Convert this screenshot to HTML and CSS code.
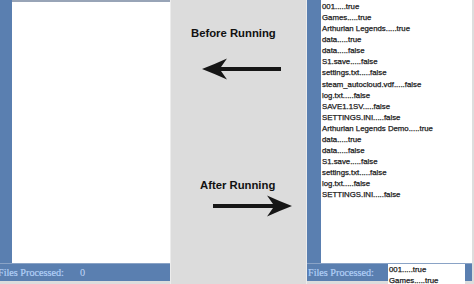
FILE: index.html
```html
<!DOCTYPE html>
<html>
<head>
<meta charset="utf-8">
<link rel="stylesheet" href="styles.css">
</head>
<body>
<div class="app">
  <div class="pane pane-left">
    <div class="pane-main">
      <div class="strip strip-left"></div>
      <div class="sheet sheet-left"></div>
    </div>
    <div class="bar">
      <span class="bar-label bar-label-left">Files Processed:</span>
      <span class="bar-count">0</span>
    </div>
  </div>

  <div class="middle">
    <div class="caption caption-before">Before Running</div>
    <svg class="arrow arrow-left" width="80" height="24" viewBox="0 0 80 24">
      <path d="M0 11 Q13 6 25 0.5 L19 9 L79 9 L79 13 L19 13 L25 21.5 Q13 16 0 11 Z" fill="#161616"/>
    </svg>
    <div class="caption caption-after">After Running</div>
    <svg class="arrow arrow-right" width="80" height="24" viewBox="0 0 80 24">
      <path d="M80 11 Q67 6 55 0.5 L61 9 L1 9 L1 13 L61 13 L55 21.5 Q67 16 80 11 Z" fill="#161616"/>
    </svg>
  </div>

  <div class="pane pane-right">
    <div class="pane-main">
      <div class="strip strip-right"></div>
      <div class="sheet sheet-right">
        <div class="list">
          <div>001.....true</div>
          <div>Games.....true</div>
          <div>Arthurian Legends.....true</div>
          <div>data.....true</div>
          <div>data.....false</div>
          <div>S1.save.....false</div>
          <div>settings.txt.....false</div>
          <div>steam_autocloud.vdf.....false</div>
          <div>log.txt.....false</div>
          <div>SAVE1.1SV.....false</div>
          <div>SETTINGS.INI.....false</div>
          <div>Arthurian Legends Demo.....true</div>
          <div>data.....true</div>
          <div>data.....false</div>
          <div>S1.save.....false</div>
          <div>settings.txt.....false</div>
          <div>log.txt.....false</div>
          <div>SETTINGS.INI.....false</div>
        </div>
      </div>
    </div>
    <div class="bar">
      <span class="bar-label bar-label-right">Files Processed:</span>
      <div class="mini-list">
        <div>001.....true</div>
        <div>Games.....true</div>
      </div>
    </div>
  </div>
</div>
</body>
</html>
```

FILE: styles.css
```css
html, body {
  margin: 0;
  padding: 0;
}

body {
  width: 474px;
  height: 284px;
  overflow: hidden;
  background: #dddddd;
  font-family: "Liberation Sans", Arial, sans-serif;
}

.app {
  display: flex;
  width: 474px;
  height: 284px;
}

.pane {
  display: flex;
  flex-direction: column;
  height: 284px;
  background: #dddddd;
}

.pane-left {
  width: 170px;
}

.pane-right {
  width: 165px;
}

.pane-main {
  display: flex;
  height: 263px;
}

.strip {
  background: #5a7fb0;
}

.strip-left {
  width: 12px;
}

.strip-right {
  width: 14px;
}

.sheet {
  flex: 1;
  background: #ffffff;
  overflow: hidden;
}

.sheet-left {
  border-top: 2px solid #98a4b7;
}

.list {
  padding: 1px 0 0 1px;
  font-size: 7.8px;
  line-height: 11.08px;
  color: #1a1a1a;
  -webkit-text-stroke: 0.25px #1a1a1a;
  white-space: nowrap;
}

.bar {
  display: flex;
  align-items: flex-start;
  height: 17px;
  border-top: 1px solid #8aa3c6;
  background: #5a7fb0;
}

.bar-label {
  flex: none;
  font-family: "Liberation Serif", "Times New Roman", serif;
  font-size: 10.2px;
  line-height: 17px;
  color: #b3d0f7;
  -webkit-text-stroke: 0.2px #b3d0f7;
  white-space: nowrap;
}

.bar-label-left {
  margin-left: -2px;
}

.bar-count {
  margin-left: 16px;
  font-family: "Liberation Serif", "Times New Roman", serif;
  font-size: 10.2px;
  line-height: 17px;
  color: #c3dafa;
}

.bar-label-right {
  width: 80px;
  margin-left: 1px;
}

.mini-list {
  flex: none;
  width: 77px;
  height: 20px;
  padding-left: 1px;
  box-sizing: border-box;
  background: #ffffff;
  overflow: hidden;
  font-size: 7.8px;
  line-height: 11.08px;
  color: #1a1a1a;
  -webkit-text-stroke: 0.25px #1a1a1a;
  white-space: nowrap;
}

.middle {
  display: flex;
  flex-direction: column;
  width: 137px;
  height: 284px;
  padding-top: 27px;
  box-sizing: border-box;
  background: #dcdcdc;
  border-left: 1px solid #ececec;
  border-right: 1px solid #ececec;
}

.caption {
  font-size: 11.3px;
  line-height: 13px;
  font-weight: bold;
  color: #111111;
  white-space: nowrap;
}

.caption-before {
  margin-left: 20px;
}

.arrow {
  display: block;
  flex: none;
}

.arrow-left {
  margin-top: 18px;
  margin-left: 31px;
}

.caption-after {
  margin-top: 97px;
  margin-left: 29px;
}

.arrow-right {
  margin-top: 3px;
  margin-left: 41px;
}
```
